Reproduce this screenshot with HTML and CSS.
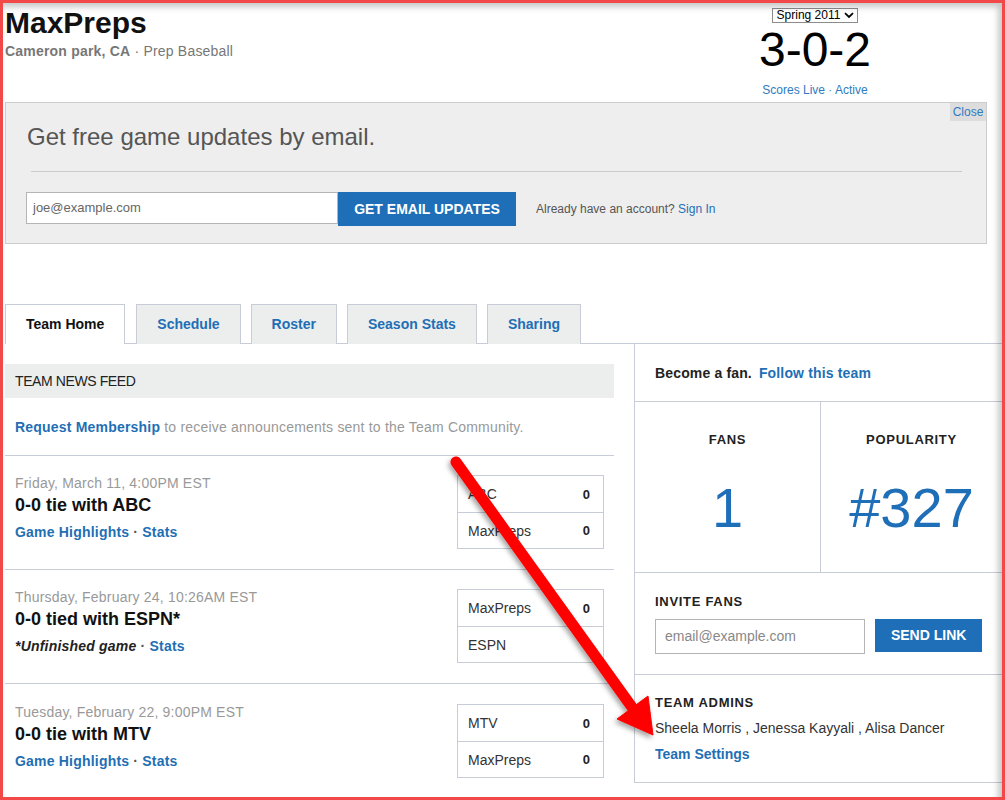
FILE: index.html
```html
<!DOCTYPE html>
<html>
<head>
<meta charset="utf-8">
<title>MaxPreps</title>
<link rel="stylesheet" href="styles.css">
</head>
<body>
<div class="frame">
  <div class="page">
    <header class="header">
      <div class="brand">
        <h1 class="title">MaxPreps</h1>
        <div class="sub"><b>Cameron park, CA</b> · Prep Baseball</div>
      </div>
      <div class="record">
        <div class="season">Spring 2011
          <svg class="chev" width="10" height="7" viewBox="0 0 10 7"><path d="M1 1.2 L5 5 L9 1.2" fill="none" stroke="#000" stroke-width="1.8"/></svg>
        </div>
        <div class="wlt">3-0-2</div>
        <div class="live"><a>Scores Live</a> · <a>Active</a></div>
      </div>
    </header>

    <section class="promo">
      <a class="close">Close</a>
      <h2 class="promo-title">Get free game updates by email.</h2>
      <hr class="promo-rule">
      <div class="promo-row">
        <div class="promo-input">joe@example.com</div>
        <div class="btn promo-btn">GET EMAIL UPDATES</div>
        <div class="signin">Already have an account? <a>Sign In</a></div>
      </div>
    </section>

    <nav class="tabs">
      <div class="tab active">Team Home</div>
      <div class="tab">Schedule</div>
      <div class="tab">Roster</div>
      <div class="tab">Season Stats</div>
      <div class="tab">Sharing</div>
    </nav>

    <div class="content">
      <main class="feed">
        <div class="feed-head">TEAM NEWS FEED</div>
        <div class="membership"><a>Request Membership</a> to receive announcements sent to the Team Community.</div>

        <div class="game">
          <div class="game-info">
            <div class="game-date">Friday, March 11, 4:00PM EST</div>
            <div class="game-title">0-0 tie with ABC</div>
            <div class="game-links"><a>Game Highlights</a> · <a>Stats</a></div>
          </div>
          <div class="box">
            <div class="box-row"><span>ABC</span><b>0</b></div>
            <div class="box-row"><span>MaxPreps</span><b>0</b></div>
          </div>
        </div>

        <div class="game">
          <div class="game-info">
            <div class="game-date">Thursday, February 24, 10:26AM EST</div>
            <div class="game-title">0-0 tied with ESPN*</div>
            <div class="game-links"><i class="note">*Unfinished game</i> · <a>Stats</a></div>
          </div>
          <div class="box">
            <div class="box-row"><span>MaxPreps</span><b>0</b></div>
            <div class="box-row"><span>ESPN</span><b></b></div>
          </div>
        </div>

        <div class="game">
          <div class="game-info">
            <div class="game-date">Tuesday, February 22, 9:00PM EST</div>
            <div class="game-title">0-0 tie with MTV</div>
            <div class="game-links"><a>Game Highlights</a> · <a>Stats</a></div>
          </div>
          <div class="box">
            <div class="box-row"><span>MTV</span><b>0</b></div>
            <div class="box-row"><span>MaxPreps</span><b>0</b></div>
          </div>
        </div>
      </main>

      <aside class="side">
        <div class="fan">Become a fan. <a>Follow this team</a></div>
        <div class="stats">
          <div class="stat stat-fans">
            <div class="label">FANS</div>
            <div class="big">1</div>
          </div>
          <div class="stat">
            <div class="label">POPULARITY</div>
            <div class="big">#327</div>
          </div>
        </div>
        <div class="invite">
          <div class="label">INVITE FANS</div>
          <div class="invite-row">
            <div class="invite-input">email@example.com</div>
            <div class="btn invite-btn">SEND LINK</div>
          </div>
        </div>
        <div class="admins">
          <div class="label">TEAM ADMINS</div>
          <div class="admin-names">Sheela Morris , Jenessa Kayyali , Alisa Dancer</div>
          <a class="settings">Team Settings</a>
        </div>
      </aside>
    </div>
  </div>

  <svg class="arrow" width="1005" height="800" viewBox="0 0 1005 800">
    <defs>
      <filter id="sh" x="-20%" y="-20%" width="140%" height="140%">
        <feDropShadow dx="-2" dy="3" stdDeviation="2.5" flood-color="#000" flood-opacity="0.35"/>
      </filter>
    </defs>
    <g filter="url(#sh)" fill="#ff0000" stroke="#ff0000">
      <line x1="456" y1="462" x2="634" y2="710" stroke-width="11" stroke-linecap="round"/>
      <polygon points="653,735 617,719 648,696" stroke-width="1" stroke-linejoin="miter"/>
    </g>
  </svg>
</div>
</body>
</html>
```

FILE: styles.css
```css
* { box-sizing: border-box; }

html, body {
  margin: 0;
  padding: 0;
  background: #fff;
}

body {
  font-family: "Liberation Sans", Arial, sans-serif;
  color: #222;
}

a { color: #1f6fb5; text-decoration: none; }

.frame {
  position: relative;
  width: 1005px;
  height: 800px;
  border: 3px solid #f24848;
  overflow: hidden;
  background: #fff;
}

.frame::after {
  content: "";
  position: absolute;
  inset: 0;
  pointer-events: none;
  box-shadow: inset -5px 5px 6px -1px rgba(0, 0, 0, 0.22);
}

.page {
  padding-left: 2px;
  width: 999px;
}

/* header */
.header {
  height: 99px;
  display: flex;
  justify-content: space-between;
}

.brand { padding-top: 3px; }

.title {
  margin: 0;
  font-size: 30px;
  line-height: 34px;
  font-weight: bold;
  color: #111;
}

.sub {
  margin-top: 2px;
  font-size: 14px;
  line-height: 18px;
  letter-spacing: 0.2px;
  color: #777;
}

.sub b { color: #777; }

.record {
  width: 160px;
  margin-right: 107px;
  padding-top: 2px;
  text-align: center;
}

.season {
  display: inline-flex;
  align-items: center;
  gap: 4px;
  height: 15px;
  padding: 0 3px 0 4px;
  border: 1px solid #8c8c8c;
  font-size: 12px;
  line-height: 13px;
  color: #000;
}

.wlt {
  margin-top: 3px;
  font-size: 48px;
  line-height: 48px;
  color: #000;
}

.live {
  margin-top: 9px;
  font-size: 12px;
  line-height: 14px;
  color: #5a8fc6;
}

.live a { color: #2f7bc2; }

/* promo */
.promo {
  position: relative;
  width: 982px;
  height: 142px;
  background: #eeeeee;
  border: 1px solid #cccccc;
  padding: 20px 20px 0 20px;
}

.close {
  position: absolute;
  top: 0;
  right: 0;
  width: 36px;
  height: 18px;
  background: #dddddd;
  font-size: 12px;
  line-height: 18px;
  text-align: center;
  color: #2f7bc2;
}

.promo-title {
  margin: 0;
  padding-left: 1px;
  font-size: 24px;
  line-height: 28px;
  font-weight: normal;
  color: #555;
}

.promo-rule {
  margin: 20px 4px 0 5px;
  border: 0;
  border-top: 1px solid #cccccc;
  height: 0;
}

.promo-row {
  margin-top: 20px;
  display: flex;
  align-items: center;
  height: 34px;
}

.promo-input {
  width: 312px;
  height: 32px;
  align-self: flex-start;
  background: #fff;
  border: 1px solid #b5b5b5;
  padding-left: 6px;
  font-size: 13px;
  line-height: 30px;
  color: #666;
}

.btn {
  background: #1e6fb8;
  color: #fff;
  font-weight: bold;
  font-size: 14px;
  text-align: center;
}

.promo-btn {
  width: 178px;
  height: 34px;
  line-height: 34px;
}

.signin {
  margin-left: 20px;
  font-size: 12px;
  color: #555;
}

/* tabs */
.tabs {
  margin-top: 60px;
  display: flex;
  gap: 10px;
  height: 40px;
  border-bottom: 1px solid #c8ccd6;
}

.tab {
  height: 40px;
  padding: 0 20px;
  background: #eceeee;
  border: 1px solid #c8ccd6;
  border-bottom: 0;
  font-size: 14px;
  font-weight: bold;
  line-height: 38px;
  color: #1f6fb5;
}

.tab.active {
  background: #fff;
  color: #111;
  height: 40px;
  margin-right: 1px;
  position: relative;
  z-index: 1;
}

.tab.active::after {
  content: "";
  position: absolute;
  left: 0;
  right: 0;
  bottom: -1px;
  height: 1px;
  background: #fff;
}

/* content */
.content {
  display: flex;
  align-items: flex-start;
}

.feed {
  flex: 0 0 629px;
  width: 629px;
  padding: 20px 20px 0 0;
}

.feed-head {
  height: 34px;
  background: #eceeee;
  padding-left: 10px;
  font-size: 14px;
  line-height: 34px;
  letter-spacing: -0.4px;
  color: #222;
}

.membership {
  padding: 19px 10px 18px;
  font-size: 14px;
  line-height: 20px;
  letter-spacing: 0.2px;
  color: #999;
}

.membership a { font-weight: bold; }

.game {
  border-top: 1px solid #c8ccd6;
  padding: 19px 10px 20px;
  display: flex;
  justify-content: space-between;
}

.game + .game + .game { padding-top: 20px; }

.game-date {
  font-size: 14px;
  line-height: 16px;
  letter-spacing: 0.2px;
  color: #999;
}

.game-title {
  margin-top: 3px;
  font-size: 18px;
  line-height: 22px;
  font-weight: bold;
  color: #111;
}

.game-links {
  margin-top: 8px;
  font-size: 14px;
  line-height: 16px;
  letter-spacing: 0.2px;
  font-weight: bold;
  color: #555;
}

.note {
  color: #222;
  font-weight: bold;
}

.box {
  width: 147px;
  border: 1px solid #c8ccd6;
}

.box-row {
  height: 36px;
  display: flex;
  justify-content: space-between;
  align-items: center;
  padding: 0 13px 0 10px;
  font-size: 14px;
  color: #333;
}

.box-row + .box-row { border-top: 1px solid #c8ccd6; height: 36px; }

.box-row b { font-size: 13px; color: #222; }

/* side */
.side {
  flex: 1 1 auto;
  min-width: 0;
  border-left: 1px solid #c8ccd6;
  border-bottom: 1px solid #c8ccd6;
}

.fan {
  height: 58px;
  padding-left: 20px;
  display: flex;
  align-items: center;
  gap: 3px;
  border-bottom: 1px solid #c8ccd6;
  font-size: 14px;
  font-weight: bold;
  letter-spacing: 0.15px;
  color: #222;
  white-space: pre;
}

.stats {
  display: flex;
  height: 171px;
  border-bottom: 1px solid #c8ccd6;
}

.stat {
  flex: 1;
  text-align: center;
  padding-top: 30px;
}

.stat-fans {
  flex: 0 0 186px;
  border-right: 1px solid #c8ccd6;
}

.label {
  font-size: 13px;
  line-height: 16px;
  font-weight: bold;
  letter-spacing: 0.7px;
  color: #222;
}

.big {
  margin-top: 30px;
  font-size: 56px;
  line-height: 60px;
  color: #1e6fb8;
}

.invite {
  padding: 21px 20px 20px 20px;
  border-bottom: 1px solid #c8ccd6;
}

.invite-row {
  margin-top: 9px;
  display: flex;
  gap: 10px;
  align-items: flex-start;
}

.invite-input {
  width: 211px;
  height: 35px;
  border: 1px solid #b5b5b5;
  padding-left: 9px;
  font-size: 14px;
  line-height: 33px;
  color: #888;
}

.invite-btn {
  width: 107px;
  height: 33px;
  line-height: 33px;
}

.admins {
  padding: 20px 20px 19px 20px;
}

.admin-names {
  margin-top: 8px;
  font-size: 14px;
  line-height: 18px;
  color: #333;
}

.settings {
  display: block;
  margin-top: 8px;
  font-size: 14px;
  line-height: 18px;
  font-weight: bold;
}

/* annotation */
.arrow {
  position: absolute;
  top: -3px;
  left: -3px;
  pointer-events: none;
}
```
